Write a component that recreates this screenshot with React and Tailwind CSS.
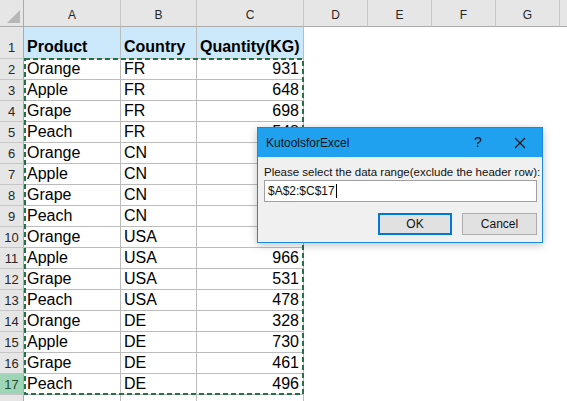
import React from "react";

const rows = [
  ["Orange", "FR", 931],
  ["Apple", "FR", 648],
  ["Grape", "FR", 698],
  ["Peach", "FR", 548],
  ["Orange", "CN", ""],
  ["Apple", "CN", ""],
  ["Grape", "CN", ""],
  ["Peach", "CN", ""],
  ["Orange", "USA", ""],
  ["Apple", "USA", 966],
  ["Grape", "USA", 531],
  ["Peach", "USA", 478],
  ["Orange", "DE", 328],
  ["Apple", "DE", 730],
  ["Grape", "DE", 461],
  ["Peach", "DE", 496],
];

const cols = ["A", "B", "C", "D", "E", "F", "G"];

const font = { fontFamily: '"Liberation Sans", Arial, sans-serif' };

export default function App() {
  return (
    <div
      className="relative w-[567px] h-[401px] overflow-hidden bg-white text-black"
      style={font}
    >
      <div className="grid grid-cols-[24px_97px_76px_107px_64px_64px_64px_64px_1fr]">
        {/* header row */}
        <div className="relative h-[27px] bg-[#e6e6e6] border-r border-b border-[#ababab]">
          <div className="absolute right-[3px] bottom-[3px] w-0 h-0 border-l-[13px] border-l-transparent border-b-[13px] border-b-[#b7b7b7]" />
        </div>
        {cols.map((c) => (
          <div
            key={c}
            className="h-[27px] bg-[#e6e6e6] border-r border-r-[#c6c6c6] border-b border-b-[#ababab] flex items-end justify-center pb-[4px] text-[12px] leading-[14px] text-[#262626]"
          >
            {c}
          </div>
        ))}
        <div className="h-[27px] bg-[#e6e6e6] border-b border-[#ababab]" />

        {/* row 1 */}
        <div className="h-[32px] bg-[#e6e6e6] border-r border-r-[#ababab] border-b border-b-[#c6c6c6] flex items-end justify-center pb-[3px] text-[13px] leading-[15px] text-[#262626]">
          1
        </div>
        {["Product", "Country", "Quantity(KG)"].map((t) => (
          <div
            key={t}
            className="h-[32px] bg-[#cce8fb] border-r border-b border-[#bcbcbc] flex items-end pl-[3px] pb-[2px] text-[16px] leading-[18px] font-bold whitespace-nowrap"
          >
            {t}
          </div>
        ))}
        <div className="h-[32px] col-span-5" />

        {/* data rows */}
        {rows.map((r, i) => {
          const n = i + 2;
          const sel = n === 17;
          return (
            <React.Fragment key={n}>
              <div
                className={
                  "h-[21px] border-r border-r-[#ababab] border-b border-b-[#c6c6c6] flex items-center justify-center text-[13px] leading-[15px] " +
                  (sel ? "bg-[#9fd5b7] text-[#1e4e2f]" : "bg-[#e6e6e6] text-[#262626]")
                }
              >
                {n}
              </div>
              <div className="h-[21px] border-r border-b border-[#bcbcbc] pl-[3px] text-[16px] leading-[20px]">
                {r[0]}
              </div>
              <div className="h-[21px] border-r border-b border-[#bcbcbc] pl-[3px] text-[16px] leading-[20px]">
                {r[1]}
              </div>
              <div className="h-[21px] border-r border-b border-[#bcbcbc] pr-[4px] text-right text-[16px] leading-[20px]">
                {r[2]}
              </div>
              <div className="h-[21px] col-span-5" />
            </React.Fragment>
          );
        })}

        {/* row 18 partial */}
        <div className="h-[21px] bg-[#e6e6e6] border-r border-[#ababab]" />
        <div className="h-[21px] border-r border-[#bcbcbc]" />
        <div className="h-[21px] border-r border-[#bcbcbc]" />
        <div className="h-[21px] border-r border-[#bcbcbc]" />
        <div className="h-[21px] col-span-5" />
      </div>

      {/* copy marquee */}
      <svg
        className="absolute left-0 top-0 pointer-events-none"
        width="567"
        height="401"
      >
        <rect
          x="25"
          y="59"
          width="278"
          height="335"
          fill="none"
          stroke="#217346"
          strokeWidth="2"
          strokeDasharray="5 3"
        />
      </svg>

      {/* dialog */}
      <div className="absolute left-[257px] top-[127px] w-[286px] h-[116px] border border-[#1a8ad8] bg-[#f0f0f0] shadow-[0_2px_8px_rgba(0,0,0,0.25)] flex flex-col">
        <div className="h-[29px] bg-[#1fa1f0] flex items-center pl-[8px] text-[12px] text-[#111]">
          <span className="flex-1">KutoolsforExcel</span>
          <span className="w-[20px] text-center text-[14px] mr-[26px]">?</span>
          <svg width="12" height="12" viewBox="0 0 12 12" className="mr-[16px]">
            <path d="M1 1 L11 11 M11 1 L1 11" stroke="#111" strokeWidth="1.1" />
          </svg>
        </div>
        <div className="flex flex-col pl-[6px] pr-[5px] pt-[7px]">
          <div className="text-[11.5px] leading-[16px] text-[#111] whitespace-nowrap">
            Please select the data range(exclude the header row):
          </div>
          <div className="h-[22px] bg-white border border-[#a0a0a0] flex items-center pl-[3px] text-[12px] text-[#111]">
            $A$2:$C$17
            <span className="inline-block w-[1px] h-[14px] bg-black ml-[1px]" />
          </div>
          <div className="flex justify-end gap-[10px] mt-[11px]">
            <div className="w-[74px] h-[22px] bg-[#e1e1e1] border-2 border-[#0078d7] flex items-center justify-center text-[12px] text-[#111]">
              OK
            </div>
            <div className="w-[75px] h-[22px] bg-[#e1e1e1] border border-[#adadad] flex items-center justify-center text-[12px] text-[#111]">
              Cancel
            </div>
          </div>
        </div>
      </div>
    </div>
  );
}
